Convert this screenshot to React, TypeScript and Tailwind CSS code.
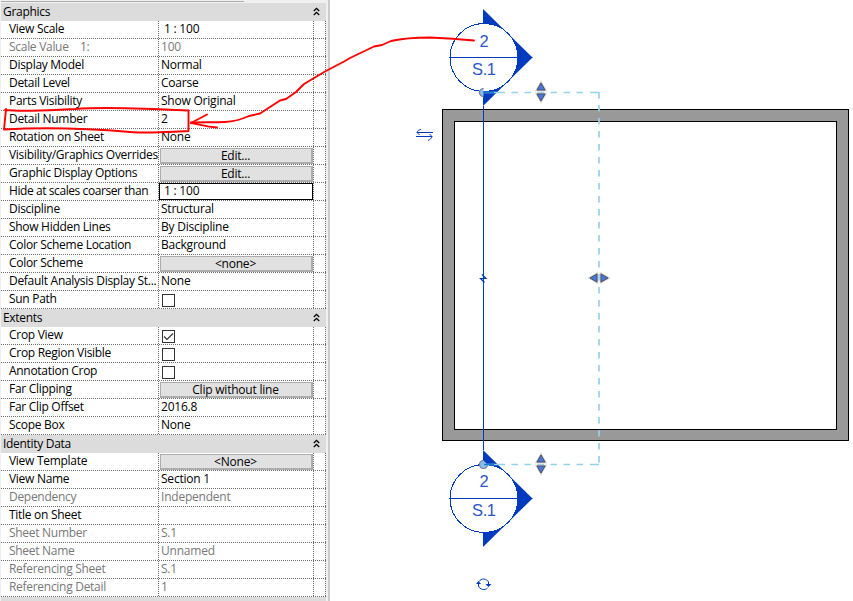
import { clsx } from 'clsx';

type Kind = 'text' | 'button' | 'input' | 'check' | 'scale';

interface Property {
  label: string;
  value?: string;
  kind?: Kind;
  checked?: boolean;
  disabled?: boolean;
  dense?: boolean;
}

interface Group {
  title: string;
  rows: Property[];
}

const groups: Group[] = [
  {
    title: 'Graphics',
    rows: [
      { label: 'View Scale', value: '1 : 100', kind: 'scale' },
      { label: 'Scale Value    1:', value: '100', disabled: true },
      { label: 'Display Model', value: 'Normal' },
      { label: 'Detail Level', value: 'Coarse' },
      { label: 'Parts Visibility', value: 'Show Original' },
      { label: 'Detail Number', value: '2' },
      { label: 'Rotation on Sheet', value: 'None' },
      { label: 'Visibility/Graphics Overrides', value: 'Edit...', kind: 'button' },
      { label: 'Graphic Display Options', value: 'Edit...', kind: 'button' },
      { label: 'Hide at scales coarser than', value: '1 : 100', kind: 'input', dense: true },
      { label: 'Discipline', value: 'Structural' },
      { label: 'Show Hidden Lines', value: 'By Discipline' },
      { label: 'Color Scheme Location', value: 'Background' },
      { label: 'Color Scheme', value: '<none>', kind: 'button' },
      { label: 'Default Analysis Display St...', value: 'None' },
      { label: 'Sun Path', kind: 'check' },
    ],
  },
  {
    title: 'Extents',
    rows: [
      { label: 'Crop View', kind: 'check', checked: true },
      { label: 'Crop Region Visible', kind: 'check' },
      { label: 'Annotation Crop', kind: 'check' },
      { label: 'Far Clipping', value: 'Clip without line', kind: 'button' },
      { label: 'Far Clip Offset', value: '2016.8' },
      { label: 'Scope Box', value: 'None' },
    ],
  },
  {
    title: 'Identity Data',
    rows: [
      { label: 'View Template', value: '<None>', kind: 'button' },
      { label: 'View Name', value: 'Section 1' },
      { label: 'Dependency', value: 'Independent', disabled: true },
      { label: 'Title on Sheet', value: '' },
      { label: 'Sheet Number', value: 'S.1', disabled: true },
      { label: 'Sheet Name', value: 'Unnamed', disabled: true },
      { label: 'Referencing Sheet', value: 'S.1', disabled: true },
      { label: 'Referencing Detail', value: '1', disabled: true },
    ],
  },
];

function DottedColumn() {
  return (
    <div className="w-px shrink-0 bg-[repeating-linear-gradient(180deg,#6e6e6e_0_1px,#ffffff_1px_2px)]" />
  );
}

function Value({ row }: { row: Property }) {
  if (row.kind === 'button') {
    return (
      <button className="mt-px ml-px h-4 w-[153px] border border-r-2 border-b-2 border-[#adadad] bg-[#e1e1e1] pr-px text-center leading-[14px]">
        {row.value}
      </button>
    );
  }
  if (row.kind === 'input') {
    return <div className="h-[17px] w-[154px] border border-black bg-white pl-1 leading-[14px]">{row.value}</div>;
  }
  if (row.kind === 'check') {
    return (
      <div className="mt-[3px] ml-[3px] h-[13px] w-[13px] border border-[#333333] bg-white">
        {row.checked && (
          <svg className="block" width="11" height="11" viewBox="0 0 11 11" fill="none" stroke="#333">
            <path d="M1 5.5 L4 8.5 L10 2.5" strokeWidth="1.2" />
          </svg>
        )}
      </div>
    );
  }
  return <div className={clsx('leading-4', row.kind === 'scale' ? 'pl-[5px]' : 'pl-0.5')}>{row.value}</div>;
}

function PropertyRow({ row }: { row: Property }) {
  return (
    <div className={clsx('flex h-[18px] flex-col', row.disabled ? 'text-[#787878]' : 'text-black')}>
      <div className="flex h-[17px]">
        <div className={clsx('w-[157px] pl-2 leading-4', row.dense ? 'tracking-[-0.42px]' : 'tracking-[-0.29px]')}>
          {row.label}
        </div>
        <DottedColumn />
        <div className="w-[154px]">
          <Value row={row} />
        </div>
        <DottedColumn />
        <div className="w-[11px]" />
        <DottedColumn />
      </div>
      <div className="h-px bg-[repeating-linear-gradient(90deg,#6e6e6e_0_1px,#ffffff_1px_2px)]" />
    </div>
  );
}

function PropertiesPanel() {
  return (
    <div className="h-[601px] w-[330px] shrink-0 overflow-hidden border-r-2 border-[#cccccc] bg-[#f0f0f0] pl-px font-['Open_Sans','Noto_Sans',sans-serif] text-[12px] tracking-[-0.22px] whitespace-pre">
      <div className="h-[3px] pt-px">
        <div className="h-px w-[243px] bg-[#adadad]" />
      </div>
      <div className="w-[325px] bg-white">
        {groups.map((group) => (
          <div key={group.title}>
            <div className="flex h-[18px] justify-between bg-[#dcdcdc] pr-[6px] pl-0.5 leading-[17px] tracking-[-0.3px]">
              <span>{group.title}</span>
              <svg className="mt-[4px]" width="7" height="9" viewBox="0 0 7 9" fill="none" stroke="#000" strokeWidth="1.3">
                <path d="M0.8 4 L3.5 1.3 L6.2 4 M0.8 8 L3.5 5.3 L6.2 8" />
              </svg>
            </div>
            {group.rows.map((row) => (
              <PropertyRow key={row.label} row={row} />
            ))}
          </div>
        ))}
        <div className="h-1 bg-[#dcdcdc]" />
      </div>
    </div>
  );
}

function SectionHead({ y, numberY }: { y: number; numberY: number }) {
  return (
    <g transform={`translate(483.5 ${y})`}>
      <path d="M-0.5 -48.5 L49 0 L-0.5 48.5 Z" fill="#003abf" />
      <circle cx="0.5" cy="0" r="34" fill="#fff" stroke="#003abf" shapeRendering="crispEdges" />
      <path d="M-34.5 0 H49" stroke="#003abf" />
      <g fill="#2a56c6" fontSize="16.5" textAnchor="middle" className="font-['Liberation_Sans',Arial,sans-serif]">
        <text x="0.5" y={numberY}>2</text>
        <text x="0.5" y="17.5" textLength="24">S.1</text>
      </g>
    </g>
  );
}

function DragArrows({ x, y, rotate = 0 }: { x: number; y: number; rotate?: number }) {
  return (
    <g transform={`translate(${x} ${y}) rotate(${rotate})`}>
      <path d="M0 -9 L4 -2 H-4 Z M0 9 L4 2 H-4 Z" stroke="#c8c8c8" strokeWidth="2.4" />
      <path d="M0 -9 L4 -2 H-4 Z M0 9 L4 2 H-4 Z" fill="#4a78d8" stroke="#4a4f68" strokeWidth="1" />
    </g>
  );
}

function SectionDrawing() {
  return (
    <svg className="block" width="523" height="601" viewBox="330 0 523 601" fill="none">
      {/* Walls */}
      <path
        d="M442.5 109.5 H848.5 V440.5 H442.5 Z M454.5 121.5 V429.5 H836.5 V121.5 Z"
        fill="#999"
        fillRule="evenodd"
        stroke="#000"
        shapeRendering="crispEdges"
      />

      {/* Section line and heads */}
      <path d="M483.5 106 V450" stroke="#003abf" />
      <SectionHead y={57.5} numberY={-10.5} />
      <SectionHead y={498.5} numberY={-11.5} />

      {/* Drag handles on the line ends */}
      <path d="M483.5 88.5 A4 4 0 0 0 483.5 96.5" fill="#8cbcf0" stroke="#6e7f90" strokeWidth="1.2" />
      <path d="M487.5 464.5 A4 4 0 0 1 479.5 464.5 A4 4 0 0 1 483.5 460.5" fill="#8cbcf0" stroke="#6e7f90" strokeWidth="1.2" />

      {/* Far clip boundary */}
      <g stroke="#96d2ea" strokeWidth="1.7">
        <path d="M599 92.5 H484" strokeDasharray="9 7 6.5 6.5 6.5 6.5 6.5 6.5 6.5 6.5 6.5 6.5 6.5 6.5 30" />
        <path d="M599 92 V464" strokeDasharray="6.5 6.5" />
        <path d="M599 464.5 H484" strokeDasharray="9 7 6.5 6.5 6.5 6.5 6.5 6.5 6.5 6.5 6.5 6.5 6.5 6.5 30" />
      </g>
      <path d="M484 92.5 H494 M484 464.5 H494" stroke="#1a7cc4" strokeWidth="1.5" />
      <DragArrows x={541} y={92} />
      <DragArrows x={541} y={464} />
      <DragArrows x={599} y={278} rotate={90} />

      {/* Flip, break and cycle controls */}
      <g stroke="#003abf">
        <path d="M433 132.5 H417 L419.5 135 M417 132.5 C417.5 130.5 419 130 421 129.5" />
        <path d="M416 136.5 H432 L429.5 134 M432 136.5 C431.5 138.5 430 139.5 428 140.5" />
        <path d="M482 274.5 L486 278.5 H480.5 L484.5 282.5" strokeWidth="1.2" />
        <path d="M479 581.5 A5.5 5.5 0 0 1 488.5 582 V585 M487.5 588 A5.5 5.5 0 0 1 478.5 586 V582" />
      </g>
      <path d="M476 584 L478.5 581 L481 584 Z M485.5 584 H491.5 L488.5 587 Z" fill="#003abf" />
    </svg>
  );
}

function RedMarkup() {
  return (
    <svg
      className="pointer-events-none absolute top-0 left-0"
      width="853"
      height="601"
      viewBox="0 0 853 601"
      fill="none"
      stroke="#f00"
      strokeWidth="1.9"
      strokeLinecap="round"
      strokeLinejoin="round"
    >
      <path d="M5 110 C25 112 50 110 75 109 C100 107 140 108 188.5 110.5 L188.5 131 C165 132 150 133.5 130 132 C95 129 45 127 4 129.5 L6 109" />
      <path d="M474 40.5 C460 39 445 38 430 37.5 C415 37.5 400 39 391 41 L382 45 L374 46.5 L350 58 L345 61 L325 71.5 L304 84 L296 92 L286 99 L280 100.5 L270 107 L260 113.5 L249 116 C240 120 235 121.5 225 122 C212 122.5 203 122 191 122.5" />
      <path d="M207 114.5 L191 123 C200 124 204 127 217 127.5" />
    </svg>
  );
}

export default function App() {
  return (
    <div className="relative flex h-[601px] w-[853px] overflow-hidden bg-white">
      <PropertiesPanel />
      <SectionDrawing />
      <RedMarkup />
    </div>
  );
}
